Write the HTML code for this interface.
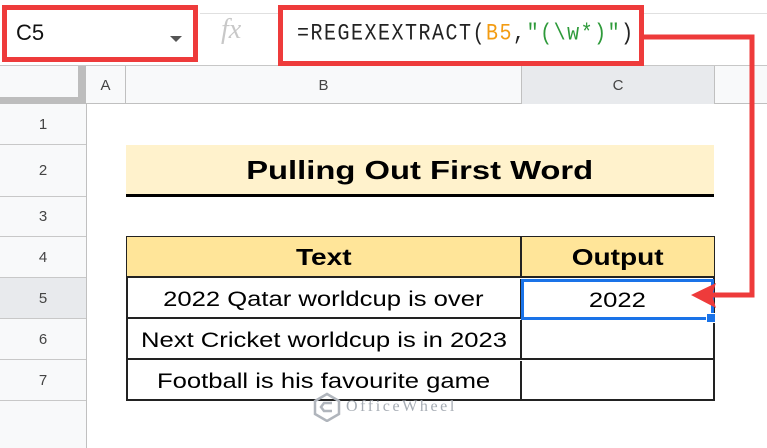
<!DOCTYPE html>
<html><head><style>
body{margin:0;width:767px;height:448px;overflow:hidden;background:#fff;font-family:"Liberation Sans",Arial,sans-serif;position:relative}
.a{position:absolute;box-sizing:border-box}
.t{display:flex;align-items:center;justify-content:center}
.s{display:inline-block;transform:scaleX(1.22)}
</style></head><body>
<div class="a" style="left:0;top:0;width:767px;height:66px;background:#fff;border-bottom:1px solid #c7c7c7"></div>
<div class="a" style="left:200px;top:13px;width:567px;height:1px;background:#e0e0e0"></div>
<div class="a" style="left:2px;top:5px;width:196px;height:57px;border:5px solid #ee3b3b;background:#fff"></div>
<div class="a" style="left:16px;top:20px;font-size:22px;color:#111">C5</div>
<div class="a" style="left:170px;top:36px;width:0;height:0;border-left:6px solid transparent;border-right:6px solid transparent;border-top:6px solid #555"></div>
<div class="a" style="left:221px;top:14px;font-family:'Liberation Serif',serif;font-style:italic;font-size:28px;color:#c8c8c8">fx</div>
<div class="a" style="left:278px;top:5px;width:366px;height:61px;border:5px solid #ee3b3b;background:#fff"></div>
<div class="a" style="left:297px;top:21px;font-family:'Liberation Mono',monospace;font-size:20px;color:#222;letter-spacing:1.5px;transform:scaleY(1.15);transform-origin:top left">=REGEXEXTRACT(<span style="color:#f39c12">B5</span>,<span style="color:#2e9a3a">"(\w*)"</span>)</div>
<div class="a" style="left:0;top:66px;width:767px;height:38px;background:#f8f9fa;border-bottom:1px solid #c0c0c0"></div>
<div class="a" style="left:0;top:66px;width:86px;height:38px;border-right:8px solid #bdbdbd;border-bottom:7px solid #bdbdbd"></div>
<div class="a t" style="left:86px;top:66px;width:40px;height:38px;border-right:1px solid #c0c0c0;font-size:15px;color:#444">A</div>
<div class="a t" style="left:126px;top:66px;width:396px;height:38px;border-right:1px solid #c0c0c0;font-size:15px;color:#444">B</div>
<div class="a t" style="left:522px;top:66px;width:193px;height:38px;background:#e8eaed;border-right:1px solid #c0c0c0;font-size:15px;color:#444">C</div>
<div class="a" style="left:0;top:104px;width:87px;height:344px;background:#f8f9fa;border-right:1px solid #c0c0c0"></div>
<div class="a t" style="left:0;top:104px;width:86px;height:41px;border-bottom:1px solid #c8c8c8;font-size:15px;color:#444">1</div>
<div class="a t" style="left:0;top:145px;width:86px;height:52px;border-bottom:1px solid #c8c8c8;font-size:15px;color:#444">2</div>
<div class="a t" style="left:0;top:197px;width:86px;height:40px;border-bottom:1px solid #c8c8c8;font-size:15px;color:#444">3</div>
<div class="a t" style="left:0;top:237px;width:86px;height:41px;border-bottom:1px solid #c8c8c8;font-size:15px;color:#444">4</div>
<div class="a t" style="left:0;top:278px;width:86px;height:41px;border-bottom:1px solid #c8c8c8;background:#e8eaed;font-size:15px;color:#444">5</div>
<div class="a t" style="left:0;top:319px;width:86px;height:41px;border-bottom:1px solid #c8c8c8;font-size:15px;color:#444">6</div>
<div class="a t" style="left:0;top:360px;width:86px;height:41px;border-bottom:1px solid #c8c8c8;font-size:15px;color:#444">7</div>
<div class="a t" style="left:126px;top:145px;width:588px;height:52px;padding-top:2px;background:#fff2cc;border-bottom:3px solid #000;font-size:26px;font-weight:bold;color:#000"><span class="s" style="transform:scaleX(1.26)">Pulling Out First Word</span></div>
<div class="a" style="left:126px;top:236px;width:589px;height:165px;border:2px solid #222"></div>
<div class="a t" style="left:127px;top:237px;width:395px;height:41px;padding-top:2px;background:#ffe599;border-right:2px solid #222;border-bottom:2px solid #222;font-size:23px;font-weight:bold"><span class="s">Text</span></div>
<div class="a t" style="left:522px;top:237px;width:192px;height:41px;padding-top:2px;background:#ffe599;border-bottom:2px solid #222;font-size:23px;font-weight:bold"><span class="s">Output</span></div>
<div class="a t" style="left:127px;top:279px;width:395px;height:40px;padding-top:3px;border-right:2px solid #222;border-bottom:2px solid #222;font-size:21px"><span class="s">2022 Qatar worldcup is over</span></div>
<div class="a t" style="left:127px;top:320px;width:395px;height:40px;padding-top:3px;border-right:2px solid #222;border-bottom:2px solid #222;font-size:21px"><span class="s">Next Cricket worldcup is in 2023</span></div>
<div class="a t" style="left:127px;top:361px;width:395px;height:39px;padding-top:3px;border-right:2px solid #222;font-size:21px"><span class="s">Football is his favourite game</span></div>
<div class="a" style="left:522px;top:320px;width:192px;height:40px;border-bottom:2px solid #222"></div>
<div class="a t" style="left:521px;top:279px;width:193px;height:41px;padding-top:3px;border:3px solid #1a73e8;font-size:21px"><span class="s">2022</span></div>
<div class="a" style="left:706px;top:313px;width:10px;height:10px;background:#1a73e8;border:1px solid #fff"></div>
<svg class="a" style="left:312px;top:392px" width="30" height="30" viewBox="0 0 30 30"><polygon points="15,2 27,9 27,22 15,29 3,22 3,9" fill="none" stroke="#b0b5bc" stroke-width="2.5"/><path d="M20,11 L12,11 L9,15 L12,19 L20,19" fill="none" stroke="#b0b5bc" stroke-width="2.5"/></svg>
<div class="a" style="left:346px;top:398px;font-family:'Liberation Serif',serif;font-size:16px;letter-spacing:2.6px;color:#a6acb4">OfficeWheel</div>
<svg class="a" style="left:0;top:0" width="767" height="448">
<polyline points="644,37 752,37 752,295 708,295" fill="none" stroke="#ee3b3b" stroke-width="5"/>
<polygon points="691,295 716,283 712,295 716,308" fill="#ee3b3b"/>
</svg>
</body></html>
